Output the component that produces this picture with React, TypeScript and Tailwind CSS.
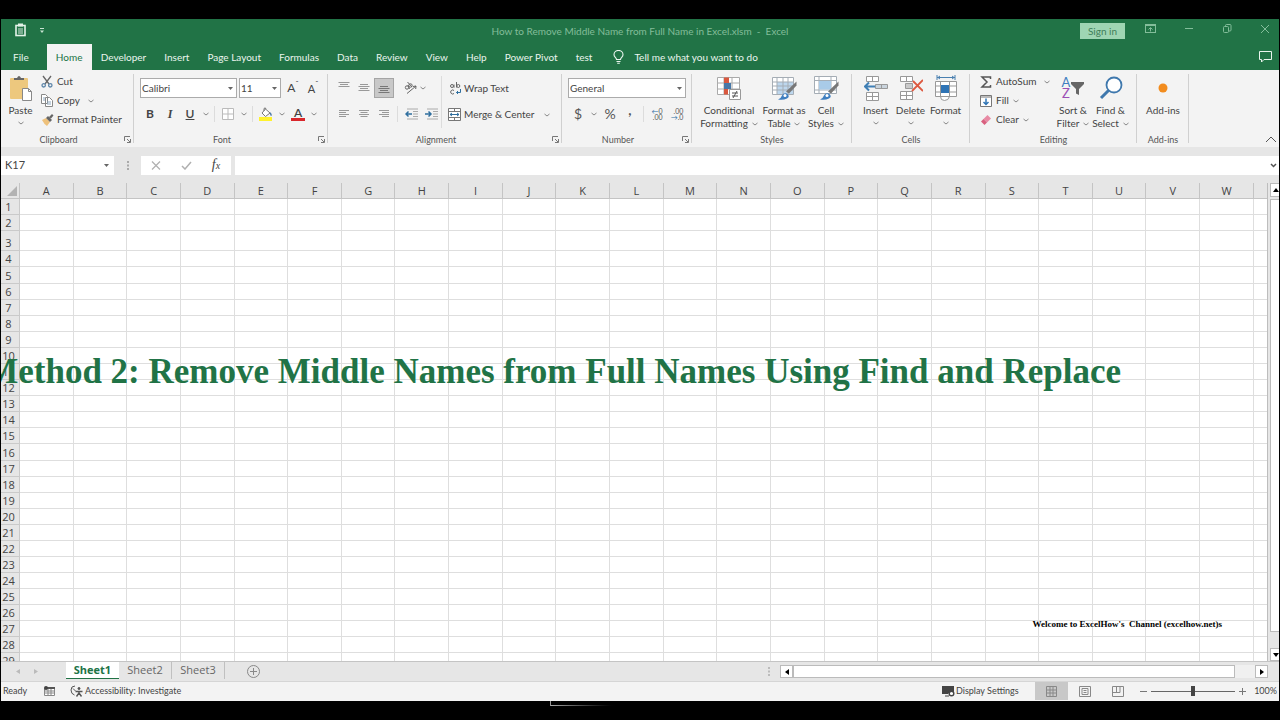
import React from 'react';

const menuTabs = ['Developer', 'Insert', 'Page Layout', 'Formulas', 'Data', 'Review', 'View', 'Help', 'Power Pivot', 'test'];
const columns = 'ABCDEFGHIJKLMNOPQRSTUVW'.split('');
const rows = Array.from({ length: 29 }, (_, i) => i + 1);

// a few rows are taller than the default
const rowHeights: Record<number, string> = { 3: 'h-5', 5: 'h-[17px]', 16: 'h-[17px]' };

function Chevron({ className = '' }: { className?: string }) {
  return (
    <svg className={`shrink-0 ${className}`} width="6" height="4" viewBox="0 0 6 4" fill="none" stroke="#888" strokeWidth="1">
      <path d="M.5 1L3 3l2.500-2" />
    </svg>
  );
}

function Triangle() {
  return (
    <svg className="shrink-0" width="5" height="3" viewBox="0 0 5 3" fill="#666">
      <path d="M0 0h5L2.5 3z" />
    </svg>
  );
}

function Separator() {
  return <span className="w-px h-4 mx-[3px] bg-[#dcdcdc] shrink-0" />;
}

function Launcher() {
  return (
    <button aria-label="More options" className="shrink-0">
      <svg width="7" height="7" viewBox="0 0 7 7" fill="none" stroke="#777" strokeWidth="1">
        <path d="M.5 5V.5H6M3 3l3 3M6.5 3v3.5H3" />
      </svg>
    </button>
  );
}

function Group({ label, width, launcher, children }: { label: string; width: string; launcher?: boolean; children: React.ReactNode }) {
  return (
    <section aria-label={label} className={`${width} shrink-0 flex flex-col relative`}>
      <div className="flex h-[62px] pt-[2px]">{children}</div>
      <div className="h-[15px] flex items-center text-[9px] leading-[14px] text-[#555]">
        <span className="flex-1 text-center whitespace-nowrap">{label}</span>
        {launcher && <span className="w-[18px] flex items-center justify-end pr-[3px]"><Launcher /></span>}
      </div>
      <span className="absolute right-0 top-1 bottom-1 w-px bg-[#d0d0d0]" />
    </section>
  );
}

function BigButton({ width, lines, icon, arrow }: { width: string; lines: string[]; icon: React.ReactNode; arrow?: 'below' | 'inline' }) {
  return (
    <button className={`${width} shrink-0 flex flex-col items-center`}>
      <span className="h-8 flex items-center justify-center">{icon}</span>
      {lines.map((line, i) => (
        <span key={line} className="flex items-center gap-1 h-[13px] whitespace-nowrap">
          {line}
          {arrow === 'inline' && i === lines.length - 1 && <Chevron />}
        </span>
      ))}
      {arrow === 'below' && <span className="h-3 flex items-center"><Chevron /></span>}
    </button>
  );
}

function SmallButton({ icon, label, arrow }: { icon: React.ReactNode; label: string; arrow?: string }) {
  return (
    <button className="h-[19px] flex items-center whitespace-nowrap">
      <span className="w-4 flex items-center">{icon}</span>
      {label}
      {arrow && <Chevron className={arrow} />}
    </button>
  );
}

function IconButton({ label, width = 'w-5', children }: { label: string; width?: string; children: React.ReactNode }) {
  return (
    <button aria-label={label} className={`${width} h-5 shrink-0 flex items-center justify-center`}>
      {children}
    </button>
  );
}

function Dropdown({ label, width, value }: { label: string; width: string; value: string }) {
  return (
    <label className={`${width} h-5 shrink-0 flex items-center bg-white border border-[#ababab] pl-px pr-[3px]`}>
      <select aria-label={label} className="appearance-none flex-1 min-w-0 h-full bg-transparent outline-none text-[#444]">
        <option>{value}</option>
      </select>
      <Triangle />
    </label>
  );
}

function Lines({ widths, align = 'center' }: { widths: number[]; align?: 'left' | 'center' | 'right' }) {
  return (
    <svg width="12" height="10" viewBox="0 0 12 10" stroke="#999" strokeWidth="1">
      {widths.map((w, i) => {
        const x = align === 'left' ? 1 : align === 'right' ? 11 - w : 6 - w / 2;
        return <path key={i} d={`M${x} ${i * 2 + 1.5}h${w}`} />;
      })}
    </svg>
  );
}

function TitleBar() {
  return (
    <header className="h-[25px] grid grid-cols-[1fr_auto_1fr] items-center text-[#83bd9a]">
      <div className="flex items-center pl-[13px] gap-4 pb-1">
        <button aria-label="Clipboard">
          <svg width="13" height="14" viewBox="0 0 13 14" fill="none">
            <rect x="2" y="2.500" width="9" height="10" stroke="#e4f3e9" strokeWidth="1.600" />
            <rect x="4" y="0.500" width="5" height="3" fill="#e4f3e9" />
            <path d="M4 6h5M4 8h5M4 10h5" stroke="#d3e8da" />
          </svg>
        </button>
        <button aria-label="Customize toolbar" className="-ml-1 pt-[2px]">
          <svg width="6" height="6" viewBox="0 0 6 6" fill="#c8e3d2">
            <path d="M1 0h4v1H1zM1 2.500h4L3 5z" />
          </svg>
        </button>
      </div>
      <h1 className="whitespace-pre text-[10px] pb-[2px]">{'How to Remove Middle Name from Full Name in Excel.xlsm  -  Excel'}</h1>
      <div className="flex items-center justify-end pr-2 gap-[26px] pb-[6px]">
        <button className="w-[45px] h-4 mt-[4px] -mr-[6px] bg-[#9fd5b3] text-[#3f7f59] text-[10px] leading-4">Sign in</button>
        <button aria-label="Ribbon display options">
          <svg width="12" height="10" viewBox="0 0 12 10" fill="none" stroke="currentColor">
            <rect x="0.500" y="0.500" width="10" height="8" />
            <path d="M0 1.500h11M5.500 7.500V4M3.500 5.500l2-2 2 2" />
          </svg>
        </button>
        <button aria-label="Minimize">
          <svg width="12" height="10" viewBox="0 0 12 10" stroke="currentColor"><path d="M2 4.500h8" /></svg>
        </button>
        <button aria-label="Restore">
          <svg width="12" height="10" viewBox="0 0 12 10" fill="none" stroke="currentColor">
            <rect x="2.500" y="2.500" width="5" height="6" rx="1" />
            <path d="M4.500 2V1.500q0-1 1-1H9q1 0 1 1V6q0 1-1 1H8" />
          </svg>
        </button>
        <button aria-label="Close">
          <svg width="12" height="10" viewBox="0 0 12 10" stroke="currentColor"><path d="M2 1l8 8M10 1L2 9" /></svg>
        </button>
      </div>
    </header>
  );
}

function MenuBar() {
  return (
    <nav className="h-[26px] flex items-stretch text-[10px] text-[#eaf5ee]">
      <button className="pl-3 pr-[18px]">File</button>
      <button className="w-[45px] bg-[#f3f3f3] text-[#217346]">Home</button>
      {menuTabs.map((tab) => (
        <button key={tab} className="px-[9px] whitespace-nowrap">{tab}</button>
      ))}
      <button className="flex items-center gap-[10px] pl-3 whitespace-nowrap">
        <svg width="11" height="14" viewBox="0 0 11 14" fill="none" stroke="currentColor" strokeWidth="1.100">
          <path d="M3.500 9.500C3.500 7.500 1 7 1 4.700a4.500 4.300 0 0 1 9 0C10 7 7.500 7.500 7.500 9.500zM3.500 11.500h4M4.200 13.300h2.600" />
        </svg>
        Tell me what you want to do
      </button>
      <button aria-label="Comments" className="ml-auto pr-[7px]">
        <svg width="13" height="12" viewBox="0 0 13 12" fill="none" stroke="currentColor">
          <path d="M.5.5h12v8H5l-2.500 2.500V8.500h-2z" />
        </svg>
      </button>
    </nav>
  );
}

function ClipboardGroup() {
  return (
    <Group label="Clipboard" width="w-[133px]" launcher>
      <BigButton
        width="w-[39px]"
        lines={['Paste']}
        arrow="below"
        icon={
          <svg width="24" height="26" viewBox="0 0 24 26">
            <rect x="1" y="3" width="18" height="21" rx="1" fill="#edc87e" />
            <path d="M5 5V3h3q2-4 4 0h3v2z" fill="#666" />
            <path d="M13.500 13.500h6l3 3v9h-9z" fill="#fff" stroke="#888" />
            <path d="M19.500 13.500v3h3" fill="none" stroke="#888" />
          </svg>
        }
      />
      <div className="flex flex-col items-start pl-px">
        <SmallButton
          label="Cut"
          icon={
            <svg width="12" height="13" viewBox="0 0 12 13" fill="none" strokeWidth="1.300">
              <path d="M2 1l6 8M10 1L4 9" stroke="#666" />
              <circle cx="2.700" cy="10.300" r="1.700" stroke="#5f87aa" />
              <circle cx="9.300" cy="10.300" r="1.700" stroke="#5f87aa" />
            </svg>
          }
        />
        <SmallButton
          label="Copy"
          arrow="ml-2"
          icon={
            <svg width="12" height="13" viewBox="0 0 12 13" fill="#fff" stroke="#888">
              <path d="M.5.5h4l2 2v7h-6zM4.500 3.500h4l3 3v6h-7z" />
              <path d="M6 8h4M6 10h4M2 4h2M2 6h2" stroke="#8aa5bd" />
            </svg>
          }
        />
        <SmallButton
          label="Format Painter"
          icon={
            <svg width="13" height="12" viewBox="0 0 13 12">
              <path d="M1 6l4-2 4 4-3 4q-3-2-5-6z" fill="#eec17c" />
              <path d="M5 4l2-2 4 4-2 2zM8 3l3-3 1.500 1.500-2.500 3z" fill="#666" />
            </svg>
          }
        />
      </div>
    </Group>
  );
}

function FontGroup() {
  return (
    <Group label="Font" width="w-[194px]" launcher>
      <div className="flex flex-col pl-[6px] pt-[6px]">
        <div className="flex items-center h-5">
          <Dropdown label="Font name" width="w-[97px]" value="Calibri" />
          <span className="w-[2px]" />
          <Dropdown label="Font size" width="w-[42px]" value="11" />
          <IconButton label="Increase font size" width="w-6"><span className="text-xs">A</span><span className="text-[8px] -mt-2">ˆ</span></IconButton>
          <IconButton label="Decrease font size" width="w-4"><span className="text-[11px]">A</span><span className="text-[8px] -mt-2">ˇ</span></IconButton>
        </div>
        <div className="flex items-center h-5 mt-[6px] text-xs">
          <IconButton label="Bold"><b>B</b></IconButton>
          <IconButton label="Italic"><i className="font-['Liberation_Serif',serif] font-bold">I</i></IconButton>
          <IconButton label="Underline"><u className="font-semibold">U</u></IconButton>
          <IconButton label="Underline style" width="w-[11px]"><Chevron /></IconButton>
          <Separator />
          <IconButton label="Borders">
            <svg width="12" height="12" viewBox="0 0 12 12" fill="#fff" stroke="#bbb">
              <path d="M.5.5h11v11H.5zM6 .5v11M.5 6h11" />
            </svg>
          </IconButton>
          <IconButton label="Border style" width="w-[11px]"><Chevron /></IconButton>
          <Separator />
          <IconButton label="Fill color">
            <svg width="14" height="14" viewBox="0 0 14 14">
              <path d="M6.500 2L11 6 6.500 9.500 3 6z" fill="#fff" stroke="#777" />
              <path d="M5 4V1.500q1.500-1.500 2 .5" fill="none" stroke="#777" />
              <path d="M11 5q2.500 2 1.500 4-1.500.5-1.500-4z" fill="#3f6f9f" />
              <path d="M0 10h13v4H0z" fill="#fff22d" />
            </svg>
          </IconButton>
          <IconButton label="Fill color list" width="w-3"><Chevron /></IconButton>
          <IconButton label="Font color">
            <span className="w-[14px] h-[14px] flex items-center justify-center border-b-[3px] border-[#d9262b] font-semibold leading-3">A</span>
          </IconButton>
          <IconButton label="Font color list" width="w-3"><Chevron /></IconButton>
        </div>
      </div>
    </Group>
  );
}

function AlignmentGroup() {
  return (
    <Group label="Alignment" width="w-[234px]" launcher>
      <div className="w-[114px] flex flex-col pl-[6px] pt-[6px] relative">
        <div className="flex items-center h-5">
          <IconButton label="Top align"><span className="-mt-1"><Lines widths={[11, 8, 11]} /></span></IconButton>
          <IconButton label="Middle align"><Lines widths={[8, 11, 8, 11]} /></IconButton>
          <button aria-label="Bottom align" aria-pressed="true" className="w-5 h-5 flex items-center justify-center pt-1 bg-[#c8c8c8] border border-[#a5a5a5]">
            <svg width="12" height="10" viewBox="0 0 12 10" stroke="#777"><path d="M2 1.500h8M.5 3.500h11M2 5.500h8M.5 7.500h11" /></svg>
          </button>
          <IconButton label="Orientation" width="w-8">
            <svg width="13" height="12" viewBox="0 0 13 12" fill="none" stroke="#666">
              <circle cx="3" cy="5.500" r="1.700" />
              <circle cx="6.500" cy="3.500" r="1.700" />
              <path d="M4 3l1.500 4M3.500 0L8 5M3 11.500L12 4M12 4l-.3 3M12 4L9 4.500" />
            </svg>
          </IconButton>
          <Chevron className="-ml-[6px]" />
        </div>
        <div className="flex items-center h-5 mt-[6px]">
          <IconButton label="Align left"><Lines align="left" widths={[10, 7, 10, 7]} /></IconButton>
          <IconButton label="Center"><Lines widths={[10, 7, 10, 7]} /></IconButton>
          <IconButton label="Align right"><Lines align="right" widths={[10, 7, 10, 7]} /></IconButton>
          <Separator />
          <IconButton label="Decrease indent">
            <svg width="13" height="12" viewBox="0 0 13 12" fill="none">
              <path d="M2 1h11M8 3.500h5M8 6h5M8 8.500h5M2 11h11" stroke="#aaa" />
              <path d="M7 6H1M3.500 3.500L1 6l2.500 2.500" stroke="#2f6f9f" strokeWidth="1.500" />
            </svg>
          </IconButton>
          <IconButton label="Increase indent">
            <svg width="13" height="12" viewBox="0 0 13 12" fill="none">
              <path d="M2 1h11M8 3.500h5M8 6h5M8 8.500h5M2 11h11" stroke="#aaa" />
              <path d="M0 6h6M3.500 3.500L6 6 3.500 8.500" stroke="#2f6f9f" strokeWidth="1.500" />
            </svg>
          </IconButton>
        </div>
        <span className="absolute right-0 top-1 bottom-1 w-px bg-[#dcdcdc]" />
      </div>
      <div className="flex flex-col items-start pl-[6px] pt-[7px] gap-[7px]">
        <SmallButton
          label="Wrap Text"
          icon={
            <svg width="14" height="13" viewBox="0 0 14 13" fill="none" stroke="#666">
              <circle cx="4" cy="4" r="1.500" />
              <path d="M6 2.500v3.200M8.500 0v5.500" />
              <circle cx="10.300" cy="4" r="1.500" />
              <path d="M6 8.500a2 2 0 1 0 0 3" />
              <path d="M12.500 7v3.500h-4M10 9l-1.500 1.500L10 12" stroke="#2f6f9f" />
            </svg>
          }
        />
        <SmallButton
          label="Merge & Center"
          arrow="ml-[10px]"
          icon={
            <svg width="13" height="13" viewBox="0 0 13 13" fill="#fff" stroke="#777">
              <path d="M.5.5h12v12H.5zM.5 3.500h12M.5 9.500h12M6.500.5v3M6.500 9.500v3" />
              <path d="M2 6.500h9M4 5L2 6.500 4 8M9 5l2 1.500L9 8" stroke="#2f6f9f" fill="none" />
            </svg>
          }
        />
      </div>
    </Group>
  );
}

function NumberGroup() {
  return (
    <Group label="Number" width="w-[130px]" launcher>
      <div className="flex flex-col pl-[6px] pt-[6px]">
        <Dropdown label="Number format" width="w-[118px]" value="General" />
        <div className="flex items-center h-5 mt-[6px] text-sm text-[#555]">
          <IconButton label="Currency">$</IconButton>
          <IconButton label="Currency list" width="w-3"><Chevron /></IconButton>
          <IconButton label="Percent">%</IconButton>
          <IconButton label="Comma style"><span className="font-bold -mt-2">,</span></IconButton>
          <Separator />
          <IconButton label="Increase decimal">
            <span className="flex flex-col items-end text-[7px] leading-[6px]">
              <span><span className="text-[#2f6fa5]">←</span>0</span>
              <span>.00</span>
            </span>
          </IconButton>
          <IconButton label="Decrease decimal">
            <span className="flex flex-col items-end text-[7px] leading-[6px]">
              <span>.00</span>
              <span><span className="text-[#2f6fa5]">→</span>.0</span>
            </span>
          </IconButton>
        </div>
      </div>
    </Group>
  );
}

function Brush() {
  return (
    <>
      <path d="M25.500 6.500v4l-7.500 8-3-2z" fill="#777" />
      <path d="M7 24.500q3-1 4-4t5-2q3.500 3 0 5-4 2-9 1z" fill="#3f7fc0" />
      <circle cx="14" cy="20.500" r="1.500" fill="#fff" />
    </>
  );
}

function StylesGroup() {
  return (
    <Group label="Styles" width="w-[160px]">
      <BigButton
        width="w-[74px]"
        lines={['Conditional', 'Formatting']}
        arrow="inline"
        icon={
          <svg width="26" height="26" viewBox="0 0 26 26">
            <path d="M1.500 2.500h22v17h-22zM1.500 8h22M1.500 14h22M8 2.500v17M16 2.500v17" fill="#fff" stroke="#aaa" />
            <path d="M8 2.500h5V8H8zM8 14h4v5.500H8z" fill="#d9583f" />
            <path d="M8 8h7v6H8z" fill="#4878a8" />
            <path d="M13.500 14.500h11v10h-11z" fill="#fff" stroke="#999" />
            <path d="M16 18h6M16 21h6M21 16l-4 7" fill="none" stroke="#555" />
          </svg>
        }
      />
      <BigButton
        width="w-9"
        lines={['Format as', 'Table']}
        arrow="inline"
        icon={
          <svg width="26" height="26" viewBox="0 0 26 26">
            <path d="M1.500 2.500h21v17h-21z" fill="#fff" />
            <path d="M6 7h16v12H6z" fill="#bdd7ee" />
            <path d="M1.500 2.500h21v17h-21zM1.500 7h21M1.500 11h21M1.500 15h21M6 2.500v17M12 2.500v17M17 2.500v17" fill="none" stroke="#a5adb5" />
            <Brush />
          </svg>
        }
      />
      <BigButton
        width="w-12"
        lines={['Cell', 'Styles']}
        arrow="inline"
        icon={
          <svg width="26" height="26" viewBox="0 0 26 26">
            <path d="M1.500 1.500h22v17h-22zM1.500 5.500h22M1.500 15h22M6 1.500v17M18 1.500v17" fill="#fff" stroke="#a5adb5" />
            <path d="M6 6h12v8.500H6z" fill="#a9cbe8" />
            <Brush />
          </svg>
        }
      />
    </Group>
  );
}

function CellsGroup() {
  return (
    <Group label="Cells" width="w-[118px]">
      <span className="w-[6px]" />
      <BigButton
        width="w-[35px]"
        lines={['Insert']}
        arrow="below"
        icon={
          <svg width="24" height="26" viewBox="0 0 24 26" stroke="#999">
            <path d="M2.500 1.500h12v5h-12zM8.500 1.500v5M2.500 17.500h12v8h-12zM2.500 21.500h12M8.500 17.500v8" fill="#fff" />
            <path d="M11.500 9.500h12v4h-12zM17.500 9.500v4" fill="#c9d3dc" />
            <path d="M1 11.500h10M5 7.500l-4 4 4 4" fill="none" stroke="#3f7fb5" strokeWidth="2" />
          </svg>
        }
      />
      <BigButton
        width="w-[35px]"
        lines={['Delete']}
        arrow="below"
        icon={
          <svg width="24" height="26" viewBox="0 0 24 26" stroke="#999">
            <path d="M1.500 1.500h12v5h-12zM7.500 1.500v5M1.500 16.500h12v8h-12zM1.500 20.500h12M7.500 16.500v8" fill="#fff" />
            <path d="M6.500 8.500h7v5h-7z" fill="#c9c9c9" />
            <path d="M14 6l10 10M24 5L13 16" fill="none" stroke="#dd5940" strokeWidth="1.800" />
          </svg>
        }
      />
      <BigButton
        width="w-[35px]"
        lines={['Format']}
        arrow="below"
        icon={
          <svg width="24" height="26" viewBox="0 0 24 26" stroke="#999">
            <path d="M1.500 6.500h21v15h-21zM1.500 11h21M1.500 17h21M6.500 6.500v15M15.500 6.500v15M6.500 21.500q0 4 4 4t5-4" fill="#fff" />
            <path d="M7 10h8v8H7z" fill="#2f74b5" stroke="none" />
            <path d="M3 2.500h18M3 0v5M21 0v5M6 1L4 2.500 6 4M18 1l2 1.500L18 4" fill="none" stroke="#4a80b0" />
          </svg>
        }
      />
    </Group>
  );
}

function EditingGroup() {
  return (
    <Group label="Editing" width="w-[167px]">
      <div className="flex flex-col items-start pl-[10px] w-[84px]">
        <SmallButton
          label="AutoSum"
          arrow="ml-2"
          icon={
            <svg width="12" height="12" viewBox="0 0 12 12" fill="none" stroke="#555" strokeWidth="1.500">
              <path d="M10.500 3V1H2l5 5-5 5h8.500V9" />
            </svg>
          }
        />
        <SmallButton
          label="Fill"
          arrow="ml-1"
          icon={
            <svg width="12" height="12" viewBox="0 0 12 12" fill="#fff" stroke="#777">
              <path d="M.5.5h11v11H.5zM.5 2h11" />
              <path d="M6 3.500v6M3.500 7L6 9.500 8.500 7" fill="none" stroke="#2f74b5" strokeWidth="1.500" />
            </svg>
          }
        />
        <SmallButton
          label="Clear"
          arrow="ml-1"
          icon={
            <svg width="12" height="12" viewBox="0 0 12 12">
              <path d="M7.500 1L11 4.500 7 8.500 3.500 5z" fill="#e88aa4" />
              <path d="M3.500 5L7 8.500 4.500 11 1 7.500z" fill="#d9607f" />
            </svg>
          }
        />
      </div>
      <BigButton
        width="w-[38px]"
        lines={['Sort &', 'Filter']}
        arrow="inline"
        icon={
          <span className="flex items-center gap-px">
            <span className="flex flex-col text-[13px] leading-[11px]">
              <span className="text-[#3f7fc0]">A</span>
              <span className="text-[#9b4fb5]">Z</span>
            </span>
            <svg width="13" height="13" viewBox="0 0 13 13" fill="#666"><path d="M0 0h13v2L8 7v6l-3-1.500V7L0 2z" /></svg>
          </span>
        }
      />
      <BigButton
        width="w-[37px]"
        lines={['Find &', 'Select']}
        arrow="inline"
        icon={
          <svg width="24" height="24" viewBox="0 0 24 24">
            <circle cx="15" cy="9" r="7.500" fill="#fff" stroke="#3f78ad" strokeWidth="1.800" />
            <path d="M9.500 14.500L2 22" stroke="#3f78ad" strokeWidth="3" />
          </svg>
        }
      />
    </Group>
  );
}

function Ribbon() {
  return (
    <div className="flex bg-[#f3f3f3] text-[10px] leading-[13px] text-[#444]">
      <ClipboardGroup />
      <FontGroup />
      <AlignmentGroup />
      <NumberGroup />
      <StylesGroup />
      <CellsGroup />
      <EditingGroup />
      <Group label="Add-ins" width="w-[52px]">
        <BigButton
          width="w-[52px]"
          lines={['Add-ins']}
          icon={<svg width="10" height="10" viewBox="0 0 10 10"><circle cx="5" cy="5" r="4.500" fill="#f28c1e" /></svg>}
        />
      </Group>
      <button aria-label="Collapse ribbon" className="ml-auto self-end pb-1 pr-[2px]">
        <svg width="12" height="7" viewBox="0 0 12 7" fill="none" stroke="#555"><path d="M1 6l5-5 5 5" /></svg>
      </button>
    </div>
  );
}

function FormulaBar() {
  return (
    <div className="flex items-stretch bg-[#e6e6e6] pt-[9px] pb-2 h-9 text-[11px] text-[#444]">
      <label className="w-[113px] shrink-0 flex items-center bg-white pl-1 pr-[5px]">
        <input aria-label="Name box" defaultValue="K17" className="flex-1 min-w-0 outline-none" />
        <Triangle />
      </label>
      <span className="w-[27px] shrink-0 flex items-center justify-center">
        <svg width="2" height="9" viewBox="0 0 2 9" fill="#aaa"><path d="M0 0h2v2H0zM0 3.500h2v2H0zM0 7h2v2H0z" /></svg>
      </span>
      <div className="w-[90px] shrink-0 flex items-center bg-white mr-1">
        <button aria-label="Cancel" className="w-[30px] flex justify-center">
          <svg width="10" height="9" viewBox="0 0 10 9" stroke="#b0b0b0" strokeWidth="1.200"><path d="M1 .5l8 8M9 .5l-8 8" /></svg>
        </button>
        <button aria-label="Enter" className="w-[30px] flex justify-center">
          <svg width="11" height="9" viewBox="0 0 11 9" fill="none" stroke="#b0b0b0" strokeWidth="1.500"><path d="M1 5l3 3 6-7" /></svg>
        </button>
        <button aria-label="Insert function" className="w-[30px] font-['Liberation_Serif',serif] italic text-sm leading-4">
          f<span className="text-[10px]">x</span>
        </button>
      </div>
      <div className="flex-1 flex items-center bg-white pr-[2px]">
        <input aria-label="Formula" className="flex-1 outline-none px-1" />
        <button aria-label="Expand formula bar">
          <svg width="7" height="5" viewBox="0 0 7 5" fill="none" stroke="#555" strokeWidth="1.500"><path d="M1 1l2.500 2.500L6 1" /></svg>
        </button>
      </div>
    </div>
  );
}

function Sheet() {
  return (
    <main className="flex-1 min-h-0 flex overflow-hidden relative bg-[#e6e6e6]">
      <div className="flex-1 overflow-hidden">
        <table className="table-fixed w-full border-separate border-spacing-0 font-['Open_Sans',sans-serif] text-[11px] leading-[14px] text-[#444] bg-white">
          <thead>
            <tr className="bg-[#e6e6e6]">
              <th className="w-[19px] h-4 p-0 border-r border-b border-[#c4c4c4]">
                <svg className="ml-auto mr-[2px]" width="10" height="10" viewBox="0 0 10 10" fill="#b3b3b3"><path d="M10 0v10H0z" /></svg>
              </th>
              {columns.map((col) => (
                <th key={col} scope="col" className="h-4 p-0 font-normal border-r border-b border-[#c4c4c4]">{col}</th>
              ))}
              <th className="w-[13px] p-0 border-b border-[#c4c4c4]" />
            </tr>
          </thead>
          <tbody>
            {rows.map((row) => (
              <tr key={row} className={rowHeights[row] ?? 'h-4'}>
                <th scope="row" className="p-0 pr-[3px] font-normal text-center align-bottom bg-[#e6e6e6] border-r border-b border-[#cacaca]">{row}</th>
                {columns.map((col) => (
                  <td key={col} className="p-0 border-r border-b border-[#dedede]" />
                ))}
                <td className="p-0 border-b border-[#dedede]" />
              </tr>
            ))}
          </tbody>
        </table>
      </div>

      {/* Vertical scrollbar */}
      <div className="w-3 shrink-0 flex flex-col border-l border-[#bdbdbd] pl-[2px] overflow-hidden">
        <button aria-label="Scroll up" className="h-[14px] w-3 shrink-0 flex items-center justify-center bg-white border border-[#bbb]">
          <svg width="6" height="4" viewBox="0 0 6 4"><path d="M0 4h6L3 0z" /></svg>
        </button>
        <div className="flex-1 w-3 bg-white border border-[#bbb] mt-[2px] mb-[16px]" />
        <button aria-label="Scroll down" className="h-[13px] w-3 shrink-0 flex items-center justify-center bg-white border border-[#bbb]">
          <svg width="6" height="4" viewBox="0 0 6 4"><path d="M0 0h6L3 4z" /></svg>
        </button>
      </div>

      {/* Captions that run over the cells */}
      <h2 className="absolute top-[168px] right-[158px] whitespace-nowrap font-['Liberation_Serif',serif] font-bold text-[35px] leading-[42px] text-[#217346]">
        Method 2: Remove Middle Names from Full Names Using Find and Replace
      </h2>
      <p className="absolute bottom-[31px] right-[57px] whitespace-pre font-['Liberation_Serif',serif] font-bold text-[9px] leading-3 text-black">
        {"Welcome to ExcelHow's  Channel (excelhow.net)s"}
      </p>
    </main>
  );
}

function SheetTabs() {
  return (
    <div className="h-5 flex items-stretch bg-[#e6e6e6] border-t border-[#c4c4c4] font-['Open_Sans',sans-serif] text-[11px] leading-[14px] text-[#666]">
      <div className="w-[65px] flex items-center gap-[14px] pl-[15px]">
        <button aria-label="Previous sheet"><svg width="4" height="5" viewBox="0 0 4 5" fill="#bbb"><path d="M4 0v5L0 2.500z" /></svg></button>
        <button aria-label="Next sheet"><svg width="4" height="5" viewBox="0 0 4 5" fill="#bbb"><path d="M0 0v5l4-2.500z" /></svg></button>
      </div>
      <button className="w-[53px] mb-[2px] pb-px bg-white font-bold text-[#217346] border-b border-[#217346]">Sheet1</button>
      <button className="w-[53px] mb-[2px] pb-[2px] border-r border-[#c0c0c0]">Sheet2</button>
      <button className="w-[53px] mb-[2px] pb-[2px] border-r border-[#c0c0c0]">Sheet3</button>
      <button aria-label="New sheet" className="ml-[22px]">
        <svg width="13" height="13" viewBox="0 0 13 13" fill="none" stroke="#888">
          <circle cx="6.500" cy="6.500" r="6" />
          <path d="M6.500 3v7M3 6.500h7" />
        </svg>
      </button>
      <div className="ml-auto flex items-center w-[500px] mr-[11px] py-[3px]">
        <svg className="mr-[10px]" width="2" height="9" viewBox="0 0 2 9" fill="#bbb"><path d="M0 0h2v2H0zM0 3.500h2v2H0zM0 7h2v2H0z" /></svg>
        <button aria-label="Scroll left" className="w-[13px] h-[13px] flex items-center justify-center bg-white border border-[#bbb]">
          <svg width="4" height="6" viewBox="0 0 4 6"><path d="M4 0v6L0 3z" /></svg>
        </button>
        <div className="flex-1 h-[13px] bg-white border border-[#bbb]" />
        <div className="w-5 h-[13px] bg-[#f0f0f0]" />
        <button aria-label="Scroll right" className="w-[13px] h-[13px] flex items-center justify-center bg-white border border-[#bbb]">
          <svg width="4" height="6" viewBox="0 0 4 6"><path d="M0 0v6l4-3z" /></svg>
        </button>
      </div>
    </div>
  );
}

function StatusBar() {
  return (
    <footer className="h-5 flex items-center bg-[#f3f3f3] border-t border-[#d5d5d5] text-[9px] leading-3 text-[#444] pl-[2px] pb-px">
      <span className="w-[41px]">Ready</span>
      <svg width="11" height="10" viewBox="0 0 11 10">
        <path d="M.5 2.500h10v7H.5zM.5 5h10M.5 7h10M4 3v7M7 3v7" fill="#fff" stroke="#888" />
        <path d="M3 1h8v2H3z" fill="#555" />
        <circle cx="2" cy="2" r="2" fill="#444" />
      </svg>
      <button className="flex items-center gap-[2px] ml-[15px]">
        <svg width="13" height="12" viewBox="0 0 13 12" fill="none" stroke="#555">
          <path d="M5 1Q1 1 1 5t3.500 5" />
          <path d="M3 3.500l2.500 2.500" />
          <circle cx="9" cy="3.500" r="1" fill="#444" />
          <path d="M5.500 6.500h7M9 6v2.500M9 8l-2.500 3.500M9 8l2.500 3.500" strokeWidth="1.400" />
        </svg>
        Accessibility: Investigate
      </button>
      <button className="ml-auto flex items-center gap-px mr-4">
        <svg width="13" height="12" viewBox="0 0 13 12">
          <path d="M0 1h12v6H8L6 9H0z" fill="#444" />
          <path d="M3 11h4" stroke="#444" />
          <circle cx="9.500" cy="8.500" r="2.300" fill="#fff" stroke="#444" strokeWidth="1.400" />
        </svg>
        <span className="w-[63px] text-left whitespace-nowrap">Display Settings</span>
      </button>
      <button aria-label="Normal view" className="w-[33px] h-[18px] flex items-center justify-center bg-[#c8c8c8]">
        <svg width="11" height="11" viewBox="0 0 11 11" fill="none" stroke="#888"><path d="M.5.5h10v10H.5zM.5 4h10M.5 7h10M4 .5v10M7 .5v10" /></svg>
      </button>
      <button aria-label="Page layout view" className="w-[33px] flex justify-center">
        <svg width="12" height="11" viewBox="0 0 12 11" fill="none" stroke="#888"><path d="M.5.5h11v10H.5zM3 2.500h6v6H3zM4.500 4.500h3M4.500 6.500h3" /></svg>
      </button>
      <button aria-label="Page break view" className="w-[33px] flex justify-center">
        <svg width="12" height="11" viewBox="0 0 12 11" fill="none" stroke="#888"><path d="M.5.5h11v10H.5zM4.500.5v6M8 .5v6M.5 6.500H8" /></svg>
      </button>
      <button aria-label="Zoom out" className="w-[7px] ml-[6px]">
        <svg width="7" height="7" viewBox="0 0 7 7" stroke="#777"><path d="M0 3.500h7" /></svg>
      </button>
      <input
        type="range"
        aria-label="Zoom"
        defaultValue={50}
        className="w-[84px] h-3 mx-1 appearance-none bg-transparent [&::-webkit-slider-runnable-track]:h-px [&::-webkit-slider-runnable-track]:bg-[#666] [&::-webkit-slider-thumb]:appearance-none [&::-webkit-slider-thumb]:w-1 [&::-webkit-slider-thumb]:h-[10px] [&::-webkit-slider-thumb]:-mt-[5px] [&::-webkit-slider-thumb]:bg-[#444]"
      />
      <button aria-label="Zoom in" className="w-[7px]">
        <svg width="7" height="7" viewBox="0 0 7 7" stroke="#777"><path d="M0 3.500h7M3.500 0v7" /></svg>
      </button>
      <span className="w-[33px] pr-[2px] text-right">100%</span>
    </footer>
  );
}

export default function App() {
  return (
    <div className="h-screen min-w-[1280px] overflow-hidden bg-black pt-[19px] pb-[19px] px-px flex flex-col relative font-[Lato,'Noto_Sans',sans-serif]">
      <div className="bg-[#217346]">
        <TitleBar />
        <MenuBar />
      </div>
      <Ribbon />
      <FormulaBar />
      <Sheet />
      <SheetTabs />
      <StatusBar />

      {/* Corner of a fading frame under the window */}
      <div className="absolute left-[43%] bottom-[14px] w-[70px] h-[5px] flex items-end border-l border-[#999]">
        <span className="h-px flex-1 bg-linear-to-r from-[#aaa] to-black" />
      </div>
    </div>
  );
}
